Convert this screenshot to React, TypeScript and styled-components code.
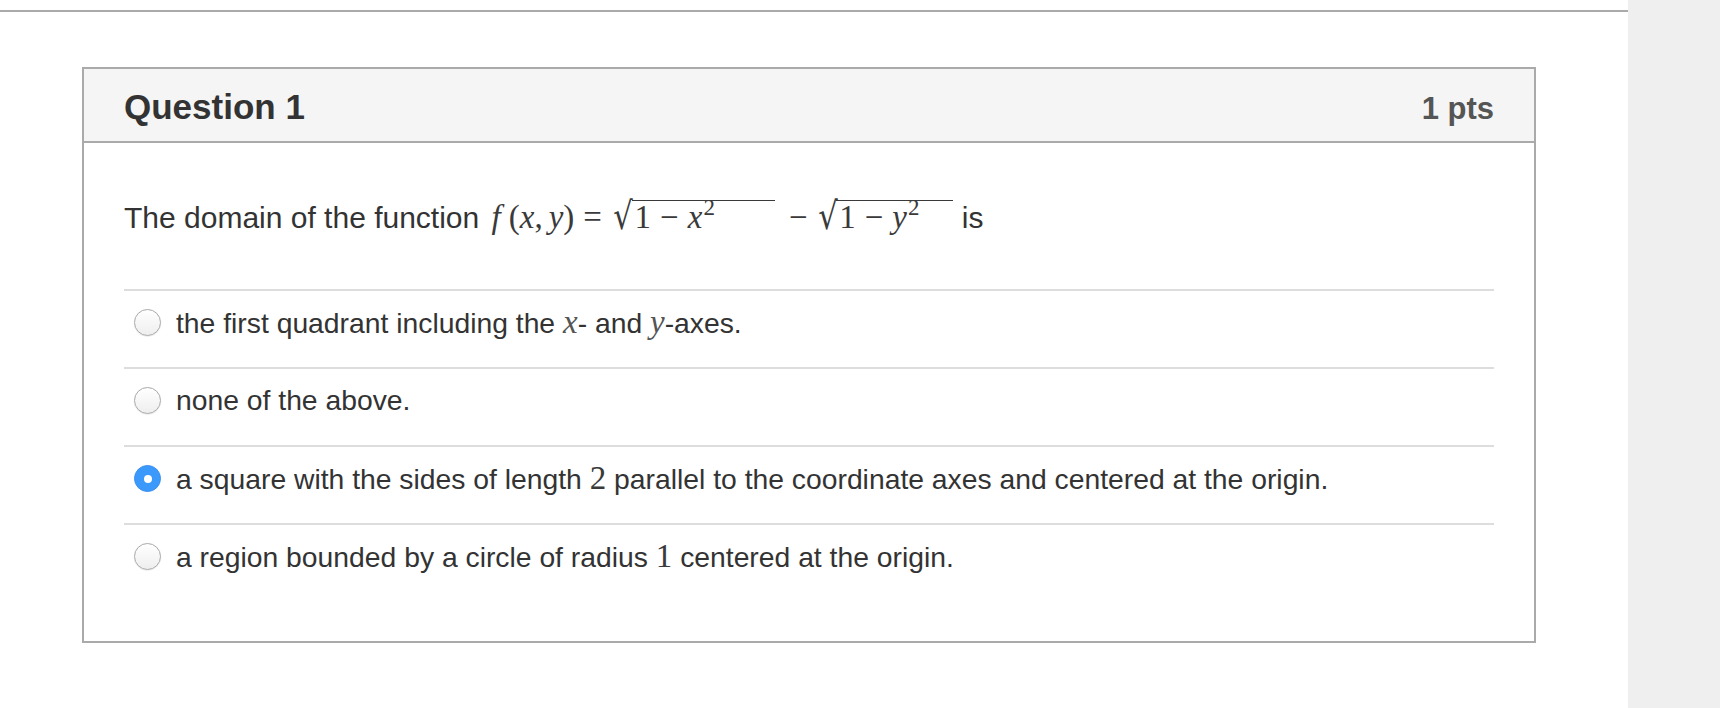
import React from "react";
import styled, { createGlobalStyle, css } from "styled-components";

const GlobalStyle = createGlobalStyle`
  html, body { margin: 0; padding: 0; background: #fff; }
  body { font-family: "Liberation Sans", Arial, sans-serif; color: #333; }
`;

const Page = styled.div`
  display: flex;
  min-height: 708px;
`;

const Main = styled.main`
  width: 1628px;
  padding-top: 10px;
  background: #fff;
`;

const Side = styled.aside`
  flex: 1;
  background: #efefef;
`;

const Content = styled.div`
  border-top: 2px solid #aaa;
  padding: 55px 0 0 82px;
`;

const Card = styled.section`
  width: 1454px;
  box-sizing: border-box;
  border: 2px solid #aaa;
`;

const Header = styled.header`
  display: flex;
  justify-content: space-between;
  align-items: baseline;
  background: #f5f5f5;
  border-bottom: 2px solid #aaa;
  padding: 20px 40px 15px 40px;
`;

const Title = styled.h2`
  margin: 0;
  font-size: 35px;
  line-height: 35px;
  font-weight: bold;
  color: #333;
`;

const Points = styled.span`
  font-size: 31px;
  line-height: 35px;
  font-weight: bold;
  color: #555;
`;

const Body = styled.div`
  padding: 54px 40px 40px 40px;
`;

const QuestionText = styled.p`
  margin: 0 0 52px 0;
  font-size: 30px;
  line-height: 40px;
  height: 40px;
  white-space: nowrap;
`;

const Answers = styled.div`
  display: flex;
  flex-direction: column;
`;

const AnswerRow = styled.label`
  display: flex;
  align-items: flex-start;
  box-sizing: border-box;
  height: 78px;
  padding-top: 11px;
  border-top: 2px solid #dddddd;
  font-size: 28.3px;
  line-height: 40px;
  white-space: nowrap;
`;

const Radio = styled.span<{ $checked?: boolean }>`
  flex: none;
  box-sizing: border-box;
  width: 27px;
  height: 27px;
  margin: 7px 15px 0 10px;
  border-radius: 50%;
  display: flex;
  align-items: center;
  justify-content: center;
  ${(p) =>
    p.$checked
      ? css`
          background: #3b99fc;
          border: 1px solid #3a8fef;
          &::after {
            content: "";
            width: 8px;
            height: 8px;
            border-radius: 50%;
            background: #fff;
          }
        `
      : css`
          background: linear-gradient(#ffffff, #eeeeee);
          border: 1px solid #a9a9a9;
          box-shadow: 0 0.5px 1px rgba(0, 0, 0, 0.12);
        `}
`;

const Math = styled.span`
  font-family: "Liberation Serif", "Times New Roman", serif;
  font-size: 33px;
  color: #3a3a3a;
  white-space: nowrap;
`;

const Mi = styled.span<{ $l?: number; $r?: number }>`
  font-style: italic;
  margin-left: ${(p) => p.$l ?? 0}px;
  margin-right: ${(p) => p.$r ?? 0}px;
`;

const Mo = styled.span<{ $l?: number; $r?: number }>`
  font-style: normal;
  margin-left: ${(p) => p.$l ?? 0}px;
  margin-right: ${(p) => p.$r ?? 0}px;
`;

const Sup = styled.span`
  font-style: normal;
  font-size: 23px;
  line-height: 0;
  vertical-align: 13px;
  margin-left: 1px;
`;

const Sqrt = styled.span`
  display: inline-block;
  white-space: nowrap;
  line-height: 1;
`;

const RadSign = styled.span`
  display: inline-block;
  font-family: "DejaVu Sans", sans-serif;
  font-size: 34px;
  line-height: 1;
  transform: scale(0.9, 1.12) translateY(1px);
  transform-origin: right bottom;
  margin-right: -1px;
`;

const Radicand = styled.span<{ $tail: number }>`
  display: inline-block;
  line-height: 1;
  border-top: 1.6px solid #3a3a3a;
  padding: 0 ${(p) => p.$tail}px 0 3px;
`;

const Num = styled.span`
  font-family: "Liberation Serif", "Times New Roman", serif;
  font-size: 33px;
  color: #3a3a3a;
`;

const Var = styled.span`
  font-family: "Liberation Serif", "Times New Roman", serif;
  font-style: italic;
  font-size: 33px;
  color: #555;
`;

const answers: { key: string; checked?: boolean; content: React.ReactNode }[] = [
  {
    key: "a",
    content: (
      <>
        the first quadrant including the <Var>x</Var>- and <Var>y</Var>-axes.
      </>
    ),
  },
  { key: "b", content: <>none of the above.</> },
  {
    key: "c",
    checked: true,
    content: (
      <>
        a square with the sides of length <Num>2</Num> parallel to the coordinate axes and
        centered at the origin.
      </>
    ),
  },
  {
    key: "d",
    content: (
      <>
        a region bounded by a circle of radius <Num>1</Num> centered at the origin.
      </>
    ),
  },
];

export default function App() {
  return (
    <>
      <GlobalStyle />
      <Page>
        <Main>
          <Content>
            <Card>
              <Header>
                <Title>Question 1</Title>
                <Points>1 pts</Points>
              </Header>
              <Body>
                <QuestionText>
                  The domain of the function{" "}
                  <Math>
                    <Mi $l={4} $r={8}>f</Mi>
                    <Mo>(</Mo>
                    <Mi>x</Mi>
                    <Mo $r={6}>,</Mo>
                    <Mi>y</Mi>
                    <Mo>)</Mo>
                    <Mo $l={9} $r={9}>=</Mo>
                    <Sqrt>
                      <RadSign>√</RadSign>
                      <Radicand $tail={60}>
                        1<Mo $l={9} $r={9}>−</Mo>
                        <Mi>x</Mi>
                        <Sup>2</Sup>
                      </Radicand>
                    </Sqrt>
                    <Mo $l={14} $r={8}>−</Mo>
                    <Sqrt>
                      <RadSign>√</RadSign>
                      <Radicand $tail={34}>
                        1<Mo $l={9} $r={9}>−</Mo>
                        <Mi>y</Mi>
                        <Sup>2</Sup>
                      </Radicand>
                    </Sqrt>
                  </Math>{" "}
                  is
                </QuestionText>
                <Answers>
                  {answers.map((a) => (
                    <AnswerRow key={a.key}>
                      <Radio $checked={a.checked} />
                      <span>{a.content}</span>
                    </AnswerRow>
                  ))}
                </Answers>
              </Body>
            </Card>
          </Content>
        </Main>
        <Side />
      </Page>
    </>
  );
}
